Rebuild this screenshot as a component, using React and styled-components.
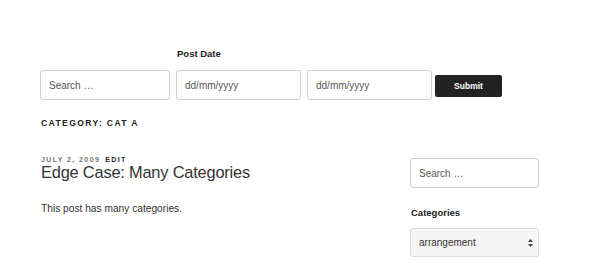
import React from 'react';
import styled, { createGlobalStyle } from 'styled-components';

const GlobalStyle = createGlobalStyle`
	body {
		margin: 0;
		background: #fff;
		font-family: "Liberation Sans", Arial, sans-serif;
		color: #333;
	}
`;

const Page = styled.div`
	width: 610px;
	height: 264px;
	overflow: hidden;
	padding: 48px 0 0 40px;
	box-sizing: border-box;
`;

const FilterForm = styled.form`
	display: flex;
	align-items: flex-end;
	gap: 6px;
`;

const Field = styled.div`
	display: flex;
	flex-direction: column;
`;

const Label = styled.label`
	font-size: 9.5px;
	font-weight: 700;
	color: #222;
	height: 22px;
	padding-left: 1px;
	${(props) => props.$hidden && 'visibility: hidden;'}
`;

const TextInput = styled.input`
	box-sizing: border-box;
	width: ${(props) => props.$width}px;
	height: 30px;
	border: 1px solid #ccc;
	border-radius: 3px;
	padding: 0 8px;
	font-family: inherit;
	font-size: 10px;
	color: #333;
	background: #fff;
	&::placeholder {
		color: #555;
	}
`;

const SubmitButton = styled.button`
	width: 67px;
	height: 22px;
	margin: 0 0 3px -3px;
	background: #222;
	color: #fff;
	border: none;
	border-radius: 2px;
	font-family: inherit;
	font-size: 8.5px;
	font-weight: 700;
`;

const ArchiveTitle = styled.h1`
	margin: 18px 0 0 1px;
	font-size: 8.6px;
	font-weight: 800;
	letter-spacing: 1.35px;
	text-transform: uppercase;
	color: #222;
`;

const Columns = styled.div`
	display: flex;
	align-items: flex-start;
	margin-top: 20px;
`;

const Main = styled.main`
	width: 369px;
	padding-left: 1px;
`;

const Meta = styled.div`
	font-size: 7px;
	font-weight: 700;
	letter-spacing: 1.4px;
	text-transform: uppercase;
	color: #767676;
	margin-top: 8px;
	span {
		color: #222;
		margin-left: 5px;
	}
`;

const PostTitle = styled.h2`
	margin: 0;
	font-size: 16.4px;
	font-weight: 400;
	color: #333;
	letter-spacing: -0.2px;
`;

const PostBody = styled.p`
	margin: 21px 0 0;
	font-size: 10.2px;
	color: #333;
`;

const Sidebar = styled.aside`
	width: 129px;
	margin-top: 10px;
	display: flex;
	flex-direction: column;
`;

const WidgetTitle = styled.h3`
	margin: 19px 0 10px 1px;
	font-size: 9.5px;
	font-weight: 700;
	color: #222;
`;

const SelectWrap = styled.div`
	position: relative;
	width: 129px;
`;

const Select = styled.select`
	appearance: none;
	box-sizing: border-box;
	width: 100%;
	height: 29px;
	border: 1px solid #ddd;
	border-radius: 3px;
	background: #f5f5f5;
	padding: 0 8px;
	font-family: inherit;
	font-size: 10px;
	color: #333;
`;

const Arrows = styled.svg`
	position: absolute;
	right: 6px;
	top: 11px;
	pointer-events: none;
`;

export default function App() {
	return (
		<Page>
			<GlobalStyle />
			<FilterForm onSubmit={(e) => e.preventDefault()}>
				<Field>
					<Label $hidden>Search</Label>
					<TextInput $width={130} placeholder="Search …" />
				</Field>
				<Field>
					<Label>Post Date</Label>
					<TextInput $width={125} placeholder="dd/mm/yyyy" />
				</Field>
				<Field>
					<Label $hidden>To</Label>
					<TextInput $width={125} placeholder="dd/mm/yyyy" />
				</Field>
				<SubmitButton type="submit">Submit</SubmitButton>
			</FilterForm>

			<ArchiveTitle>Category: Cat A</ArchiveTitle>

			<Columns>
				<Main>
					<Meta>
						July 2, 2009<span>Edit</span>
					</Meta>
					<PostTitle>Edge Case: Many Categories</PostTitle>
					<PostBody>This post has many categories.</PostBody>
				</Main>
				<Sidebar>
					<TextInput $width={129} placeholder="Search …" />
					<WidgetTitle>Categories</WidgetTitle>
					<SelectWrap>
						<Select defaultValue="arrangement">
							<option value="arrangement">arrangement</option>
						</Select>
						<Arrows width="5" height="8" viewBox="0 0 5 8">
							<path d="M2.5 0 L5 3 L0 3 Z M2.5 8 L5 5 L0 5 Z" fill="#444" />
						</Arrows>
					</SelectWrap>
				</Sidebar>
			</Columns>
		</Page>
	);
}
